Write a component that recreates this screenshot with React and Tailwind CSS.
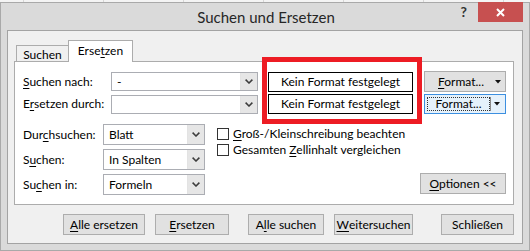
const Chevron = () => (
  <svg width="8" height="5" viewBox="0 0 8 5">
    <path d="M0.6 0.6 L4 4 L7.4 0.6" fill="none" stroke="#3c3c3c" strokeWidth="1.5" />
  </svg>
)

const Caret = () => (
  <svg width="6" height="4" viewBox="0 0 6 4">
    <path d="M0 0 H6 L3 3.5 Z" fill="#111" />
  </svg>
)

function Combo({ value, className = '' }) {
  return (
    <div className={`flex border border-[#abadb3] bg-white ${className}`}>
      <div className="flex flex-1 items-center pl-[5px]">{value}</div>
      <div className="flex w-[17px] items-center justify-center border-l border-[#e3e3e3] bg-[#e6e6e6]">
        <Chevron />
      </div>
    </div>
  )
}

function Btn({ children, className = '' }) {
  return (
    <div className={`flex h-[21px] items-center justify-center border border-[#adadad] bg-[#e1e1e1] ${className}`}>
      {children}
    </div>
  )
}

const U = ({ children }) => <span className="underline underline-offset-2">{children}</span>

export default function App() {
  return (
    <div className="relative h-[251px] w-[530px] overflow-hidden bg-white font-[Lato,sans-serif] text-[12px] leading-none text-black">
      {/* sheet strip behind the dialog */}
      <div className="flex h-[2px] bg-[#f4f4f4]">
        <div className="w-[24px] border-r border-[#d6d6d6]" />
        <div className="w-[80px] border-r border-[#d6d6d6]" />
        <div className="w-[80px] border-r border-[#d6d6d6]" />
        <div className="w-[80px] border-r border-[#d6d6d6]" />
        <div className="w-[80px] border-r border-[#d6d6d6]" />
        <div className="w-[80px] border-r border-[#d6d6d6]" />
        <div className="w-[80px] border-r border-[#d6d6d6]" />
      </div>

      {/* window */}
      <div className="flex h-[249px] flex-col border border-[#a9a9a9] bg-[#dadada]">
        <div className="relative flex h-[27px] items-start">
          <div className="flex h-full flex-1 items-center justify-center pl-[2px] pt-[1px] text-[15px] text-[#262626]">
            Suchen und Ersetzen
          </div>
          <div className="absolute right-[6px] top-[-1px] flex items-start">
            <div className="mr-[11px] mt-[3px] text-[14px] font-bold text-[#333]">?</div>
            <div className="flex h-[20px] w-[45px] items-center justify-center bg-[#c75050]">
              <svg width="9" height="9" viewBox="0 0 9 9">
                <path d="M1 1 L8 8 M8 1 L1 8" stroke="#fff" strokeWidth="2" />
              </svg>
            </div>
          </div>
        </div>

        <div className="mx-[6px] flex h-[214px] flex-col border border-[#a3a3a3] bg-[#f0f0f0] pl-[6px] pr-[8px] pt-[8px]">
          {/* tabs */}
          <div className="flex h-[22px] items-end pl-[2px]">
            <div className="flex h-[16px] w-[52px] items-center justify-center border-l border-t border-[#acacac] pt-[2px]">
              Suche<U>n</U>
            </div>
            <div className="z-10 -mb-px flex h-[22px] w-[65px] items-center justify-center border-x border-t border-[#acacac] bg-white pb-[2px]">
              Erse<U>t</U>zen
            </div>
          </div>

          {/* panel */}
          <div className="flex h-[144px] flex-col border border-[#acacac] bg-white pl-[8px] pt-[9px]">
            <div className="flex h-[21px] items-center">
              <div className="w-[88px]">
                <U>S</U>uchen nach:
              </div>
              <Combo value="-" className="h-[19px] w-[147px]" />
              <div className="ml-[10px] flex h-[20px] w-[145px] items-center justify-center border border-black">
                Kein Format festgelegt
              </div>
              <Btn className="ml-[11px] h-[17px] w-[82px] pl-[6px]">
                <span className="flex-1 text-center">
                  <U>F</U>ormat...
                </span>
                <span className="px-[4px]">
                  <Caret />
                </span>
              </Btn>
            </div>
            <div className="mt-[2px] flex h-[20px] items-center">
              <div className="w-[88px]">
                E<U>r</U>setzen durch:
              </div>
              <Combo value="" className="h-[19px] w-[147px]" />
              <div className="ml-[10px] flex h-[20px] w-[145px] items-center justify-center border border-black">
                Kein Format festgelegt
              </div>
              <div className="ml-[11px] flex h-[20px] w-[82px] items-center border border-[#3c8fe0] bg-[#e5f1fb] p-[2px]">
                <span className="flex h-full flex-1 items-center justify-center border border-dotted border-[#333]">
                  Format...
                </span>
                <span className="flex h-full items-center border-l border-[#8a8a8a] px-[3px]">
                  <Caret />
                </span>
              </div>
            </div>

            <div className="mt-[10px] flex">
              <div className="flex flex-col gap-[4px]">
                <div className="flex h-[21px] items-center">
                  <div className="w-[80px]">
                    Dur<U>c</U>hsuchen:
                  </div>
                  <Combo value="Blatt" className="h-[21px] w-[102px]" />
                </div>
                <div className="flex h-[21px] items-center">
                  <div className="w-[80px]">
                    S<U>u</U>chen:
                  </div>
                  <Combo value="In Spalten" className="h-[21px] w-[102px]" />
                </div>
                <div className="flex h-[21px] items-center">
                  <div className="w-[80px]">
                    Su<U>c</U>hen in:
                  </div>
                  <Combo value="Formeln" className="h-[21px] w-[102px]" />
                </div>
              </div>

              <div className="ml-[12px] flex flex-1 flex-col pr-[7px]">
                <div className="mt-[4px] flex h-[12px] items-center">
                  <div className="h-[12px] w-[12px] border border-[#333] bg-white" />
                  <div className="ml-[4px]">
                    <U>G</U>roß-/Kleinschreibung beachten
                  </div>
                </div>
                <div className="mt-[4px] flex h-[12px] items-center">
                  <div className="h-[12px] w-[12px] border border-[#333] bg-white" />
                  <div className="ml-[4px]">
                    Gesamten <U>Z</U>ellinhalt vergleichen
                  </div>
                </div>
                <div className="mt-[17px] flex justify-end">
                  <Btn className="w-[86px]">
                    <U>O</U>ptionen &lt;&lt;
                  </Btn>
                </div>
              </div>
            </div>
          </div>

          {/* bottom buttons */}
          <div className="mt-[9px] flex">
            <Btn className="ml-[49px] w-[82px]">
              <U>A</U>lle ersetzen
            </Btn>
            <Btn className="ml-[10px] w-[74px]">
              <U>E</U>rsetzen
            </Btn>
            <Btn className="ml-[19px] w-[76px]">
              A<U>l</U>le suchen
            </Btn>
            <Btn className="ml-[10px] w-[79px]">
              <U>W</U>eitersuchen
            </Btn>
            <Btn className="ml-[28px] w-[73px]">Schließen</Btn>
          </div>
        </div>
      </div>

      {/* red annotation frame */}
      <div className="pointer-events-none absolute left-[262px] top-[57px] h-[67px] w-[160px] border-[5px] border-[#ed1c24]" />
    </div>
  )
}
